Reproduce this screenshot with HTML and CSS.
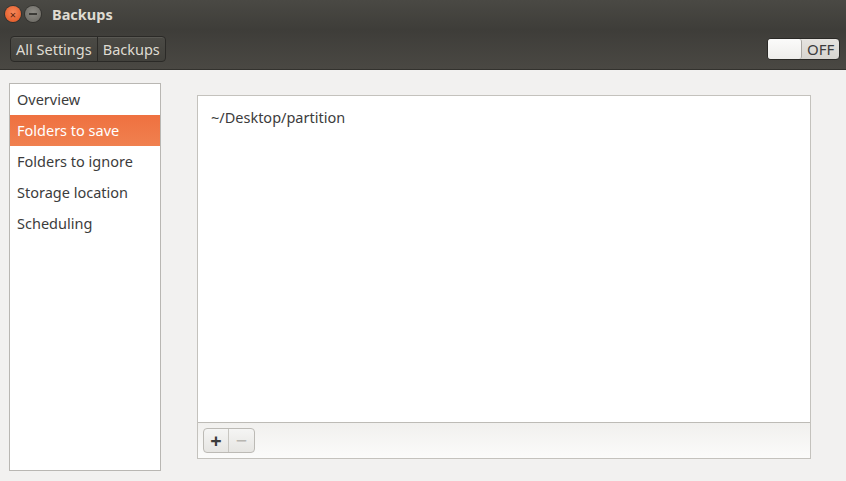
FILE: index.html
```html
<!DOCTYPE html>
<html lang="en">
<head>
    <meta charset="UTF-8">
    <title>Backups</title>
    <link rel="stylesheet" href="styles.css">
</head>
<body>
    <div class="window">
        <div class="titlebar">
            <span class="wbtn close">&times;</span>
            <span class="wbtn minimize"></span>
            <span class="title">Backups</span>
        </div>

        <div class="toolbar">
            <div class="crumbs">
                <span class="crumb">All Settings</span>
                <span class="crumb">Backups</span>
            </div>
            <div class="switch">
                <span class="knob"></span>
                <span class="state">OFF</span>
            </div>
        </div>

        <div class="content">
            <ul class="sidebar">
                <li>Overview</li>
                <li class="selected">Folders to save</li>
                <li>Folders to ignore</li>
                <li>Storage location</li>
                <li>Scheduling</li>
            </ul>

            <div class="folders">
                <div class="folder-list">
                    <div class="folder">~/Desktop/partition</div>
                </div>
                <div class="list-tools">
                    <div class="btn-group">
                        <span class="tbtn add">+</span>
                        <span class="tbtn remove">&minus;</span>
                    </div>
                </div>
            </div>
        </div>
    </div>
</body>
</html>
```

FILE: styles.css
```css
* {
    margin: 0;
    padding: 0;
    box-sizing: border-box;
    font-family: 'Noto Sans', 'DejaVu Sans', sans-serif;
}

body {
    width: 846px;
    height: 481px;
    overflow: hidden;
    background: #f2f1f0;
}

.window {
    display: flex;
    flex-direction: column;
    height: 100%;
}

.titlebar {
    height: 30px;
    display: flex;
    align-items: center;
    padding: 0 0 1px 5px;
    background: linear-gradient(#4a4944, #3e3d39);
    color: #dfdbd2;
}

.wbtn {
    width: 16px;
    height: 16px;
    border-radius: 50%;
    margin-right: 4px;
    display: flex;
    align-items: center;
    justify-content: center;
    font-size: 11px;
    line-height: 1;
}

.close {
    background: radial-gradient(circle at 50% 40%, #f7885a, #e0531f);
    color: #5a2410;
    box-shadow: 0 0 0 1px rgba(0,0,0,0.25);
}

.minimize {
    background: radial-gradient(circle at 50% 40%, #8e8c86, #67655f);
    box-shadow: 0 0 0 1px rgba(0,0,0,0.25);
}

.minimize::after {
    content: '';
    width: 8px;
    height: 2px;
    background: #3c3b37;
}

.title {
    margin-left: 7px;
    font-weight: bold;
    font-size: 14.5px;
}

.toolbar {
    height: 41px;
    display: flex;
    align-items: center;
    justify-content: space-between;
    padding: 0 6px 0 10px;
    background: linear-gradient(#3e3d39, #4a4843);
    border-bottom: 1px solid #33322e;
}

.crumbs {
    display: flex;
    height: 26px;
    border: 1px solid #2b2a27;
    border-radius: 4px;
    background: linear-gradient(#4b4a45, #42413c);
    box-shadow: inset 0 1px 0 rgba(255,255,255,0.08);
}

.crumb {
    display: flex;
    align-items: center;
    padding: 0 5px 1px;
    font-size: 14.5px;
    color: #dfdbd2;
}

.crumb + .crumb {
    border-left: 1px solid #2b2a27;
}

.switch {
    display: flex;
    align-items: center;
    width: 73px;
    height: 22px;
    border: 1px solid #2a2926;
    border-radius: 4px;
    background: linear-gradient(#e6e4e0, #d6d4cf);
}

.knob {
    width: 34px;
    height: 20px;
    border-radius: 3px;
    background: linear-gradient(#fbfbfa, #eeedeb);
    border-right: 1px solid #a9a7a2;
}

.state {
    margin-left: 5px;
    font-size: 15px;
    color: #3c3c3c;
}

.content {
    flex: 1;
    display: flex;
    align-items: flex-start;
    padding: 13px 35px 10px 9px;
    gap: 36px;
}

.sidebar {
    list-style: none;
    width: 152px;
    height: 388px;
    background: #fff;
    border: 1px solid #b9b7b3;
}

.sidebar li {
    height: 31px;
    display: flex;
    align-items: center;
    padding: 0 0 2px 7px;
    font-size: 14.5px;
    color: #3c3c3c;
}

.sidebar li.selected {
    background: linear-gradient(#ef7140, #f0804f);
    color: #fff;
}

.folders {
    flex: 1;
    margin-top: 12px;
    height: 364px;
    display: flex;
    flex-direction: column;
    border: 1px solid #c4c2bd;
    background: #fff;
}

.folder-list {
    flex: 1;
    padding: 11px 13px;
    border-bottom: 1px solid #bdbbb6;
}

.folder {
    font-size: 14.5px;
    color: #3c3c3c;
}

.list-tools {
    height: 35px;
    display: flex;
    align-items: center;
    padding-left: 5px;
    background: linear-gradient(#f1f0ee, #fbfbfa);
}

.btn-group {
    display: flex;
    height: 25px;
    border: 1px solid #bcbab5;
    border-radius: 4px;
    background: linear-gradient(#f5f5f4, #e6e5e2);
}

.tbtn {
    width: 25px;
    display: flex;
    align-items: center;
    justify-content: center;
    font-size: 20px;
    line-height: 1;
    font-weight: bold;
}

.add {
    color: #3c3c3c;
    border-right: 1px solid #c8c6c1;
}

.remove {
    color: #b8b6b1;
    font-weight: normal;
}
```
